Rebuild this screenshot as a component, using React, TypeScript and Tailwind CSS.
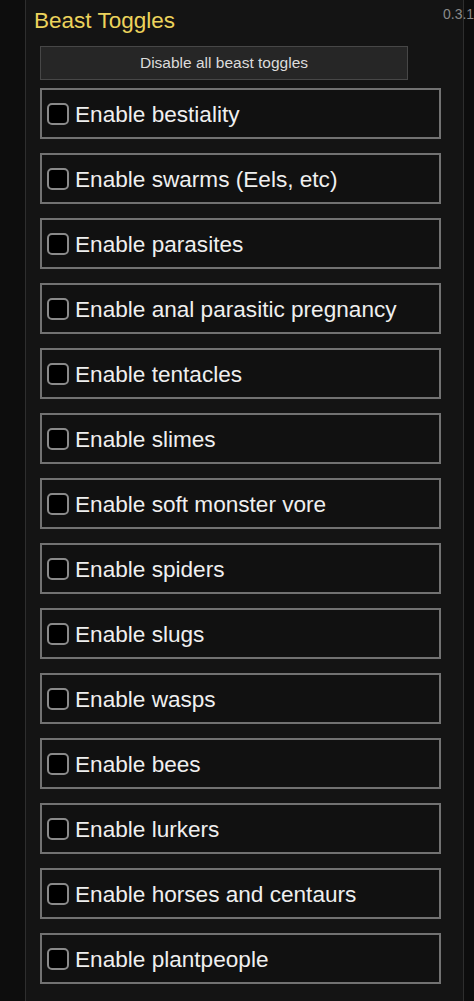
import { useState } from "react";

const toggles = [
  "Enable bestiality",
  "Enable swarms (Eels, etc)",
  "Enable parasites",
  "Enable anal parasitic pregnancy",
  "Enable tentacles",
  "Enable slimes",
  "Enable soft monster vore",
  "Enable spiders",
  "Enable slugs",
  "Enable wasps",
  "Enable bees",
  "Enable lurkers",
  "Enable horses and centaurs",
  "Enable plantpeople",
];

export default function App() {
  const [checked, setChecked] = useState<boolean[]>(toggles.map(() => false));

  return (
    <div className="relative min-h-[1001px] bg-[#0d0d0d] font-['Liberation_Sans',Arial,sans-serif]">
      <div className="ml-[25px] w-[439px] min-h-[1001px] border-x border-[#2e2e2e] bg-[#141414] pb-[14px]">
        <h1 className="pl-[8px] pt-[7px] text-[22.5px] leading-[27px] text-[#ecd35c]">Beast Toggles</h1>
        <div className="pl-[14px] pt-[12px]">
          <button
            onClick={() => setChecked(toggles.map(() => false))}
            className="h-[34px] w-[368px] border border-[#474747] bg-[#262626] text-[15.5px] text-[#dcdcdc]"
          >
            Disable all beast toggles
          </button>
          <div className="mt-[8px] flex flex-col gap-[14px]">
            {toggles.map((t, i) => (
              <label
                key={t}
                className="flex h-[51px] w-[401px] items-center border-2 border-[#727272] bg-[#111111] pl-[5px]"
              >
                <input
                  type="checkbox"
                  checked={checked[i]}
                  onChange={() => setChecked(checked.map((c, j) => (j === i ? !c : c)))}
                  className="h-[22px] w-[22px] appearance-none rounded-[5px] border-2 border-[#8a8a8a] bg-black checked:bg-[#8a8a8a]"
                />
                <span className="ml-[6px] pt-[2px] text-[22.6px] leading-[26px] text-[#efefef]">{t}</span>
              </label>
            ))}
          </div>
        </div>
      </div>
      <div className="absolute left-[443px] top-[4px] text-[14px] text-[#8a8a8a]">0.3.1</div>
    </div>
  );
}
